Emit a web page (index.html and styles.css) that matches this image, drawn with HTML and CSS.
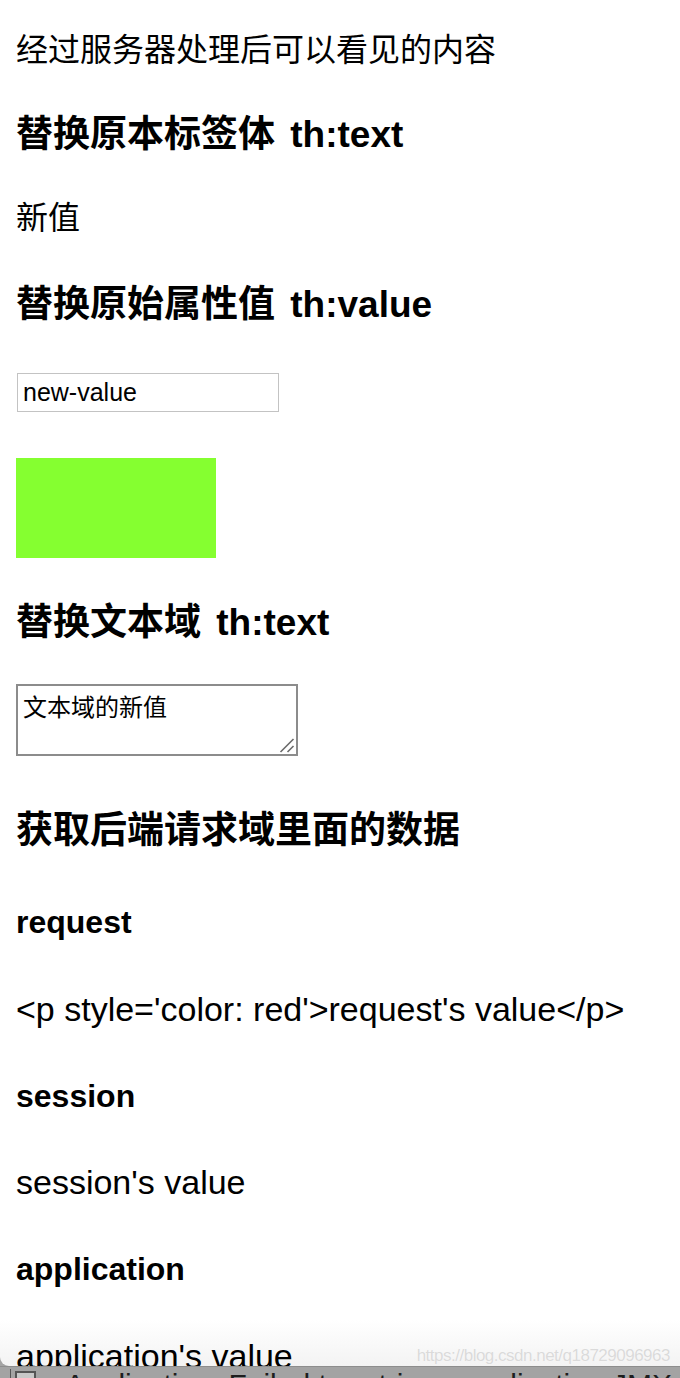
FILE: index.html
```html
<!DOCTYPE html>
<html lang="zh-CN">
<head>
<meta charset="utf-8">
<title>Thymeleaf</title>
<link rel="stylesheet" href="styles.css">
</head>
<body>
<div class="window">
  <div class="content">
    <p class="text cjk lead">经过服务器处理后可以看见的内容</p>
    <h2 class="heading">替换原本标签体 th:text</h2>
    <p class="text cjk value">新值</p>
    <h2 class="heading">替换原始属性值 th:value</h2>
    <div class="field-row"><input class="field" type="text" value="new-value"></div>
    <div class="swatch"></div>
    <h2 class="heading after-swatch">替换文本域 th:text</h2>
    <div class="memo-wrap">
      <textarea class="memo">文本域的新值</textarea>
      <svg class="grip" width="16" height="16" viewBox="0 0 16 16" aria-hidden="true">
        <line x1="1.5" y1="15" x2="14.5" y2="2" stroke="#6a6a6a" stroke-width="1.6"/>
        <line x1="8.5" y1="15" x2="14.5" y2="9" stroke="#6a6a6a" stroke-width="1.6"/>
      </svg>
    </div>
    <h2 class="heading section">获取后端请求域里面的数据</h2>
    <h4 class="label first">request</h4>
    <p class="text scope">&lt;p style='color: red'&gt;request's value&lt;/p&gt;</p>
    <h4 class="label">session</h4>
    <p class="text scope">session's value</p>
    <h4 class="label">application</h4>
    <p class="text scope">application's value</p>
  </div>
  <div class="watermark">https://blog.csdn.net/q18729096963</div>
</div>
<div class="console">
  <span class="tick"></span>
  <span class="box"></span>
  <span class="msg">Application: Failed to retrieve application JMX service URL (</span>
</div>
</body>
</html>
```
FILE: styles.css
```css
html, body {
  margin: 0;
  padding: 0;
}
body {
  width: 680px;
  height: 1378px;
  overflow: hidden;
  background: #a4a4a4;
  font-family: "Liberation Sans", "Noto Sans CJK SC", sans-serif;
  color: #000;
}
.window {
  position: relative;
  height: 1366px;
  overflow: hidden;
  background: linear-gradient(to bottom, #ffffff 0, #ffffff 1320px, #f3f3f3 1366px);
  border-bottom-left-radius: 9px;
}
.content {
  padding: 28px 16px 0;
  display: flex;
  flex-direction: column;
  align-items: flex-start;
}
.text {
  margin: 0;
  font-size: 34px;
  line-height: 40px;
  font-weight: normal;
}
.text.cjk { font-size: 32px; }
.lead { padding-top: 2px; height: 38px; }
.value { margin-top: 41px; }
.heading {
  margin: 45px 0 0;
  font-size: 37px;
  line-height: 44px;
  font-weight: bold;
  word-spacing: 5px;
}
.heading.after-swatch { margin-top: 43px; }
.heading.section { margin-top: 53px; }
.field-row { margin-top: 46px; }
.field {
  display: block;
  box-sizing: border-box;
  width: 262px;
  height: 39px;
  margin: 0 0 0 1px;
  padding: 0 5px;
  border: 1px solid #c3c3c3;
  background: #fff;
  font-family: "Liberation Sans", "Noto Sans CJK SC", sans-serif;
  font-size: 25px;
  color: #000;
  outline: none;
}
.swatch {
  margin-top: 46px;
  width: 200px;
  height: 100px;
  background: #85ff30;
}
.memo-wrap {
  position: relative;
  margin-top: 39px;
  width: 282px;
  height: 72px;
}
.memo {
  display: block;
  box-sizing: border-box;
  width: 282px;
  height: 72px;
  margin: 0;
  padding: 7px 5px;
  border: 2px solid #8c8c8c;
  background: #fff;
  font-family: "Liberation Sans", "Noto Sans CJK SC", sans-serif;
  font-size: 24px;
  line-height: 30px;
  color: #000;
  resize: none;
  outline: none;
  overflow: hidden;
}
.grip {
  position: absolute;
  right: 3px;
  bottom: 3px;
}
.label {
  margin: 47px 0 0;
  font-size: 32px;
  line-height: 40px;
  font-weight: bold;
}
.label.first { margin-top: 49px; }
.scope { margin-top: 46.5px; }
.watermark {
  position: absolute;
  right: 10px;
  bottom: 0;
  font-family: "Liberation Sans", sans-serif;
  font-size: 17px;
  line-height: 20px;
  letter-spacing: -0.5px;
  color: #dadada;
  text-shadow: 0 0 1px #ffffff;
}
.console {
  height: 12px;
  overflow: hidden;
  display: flex;
  align-items: flex-start;
  background: #a3a3a3;
  border-top: 1px solid #8d8d8d;
  box-sizing: border-box;
}
.tick {
  flex: none;
  width: 1px;
  height: 12px;
  margin: 2px 0 0 10px;
  background: #555;
}
.box {
  flex: none;
  width: 21px;
  height: 22px;
  margin: 4px 0 0 4px;
  box-sizing: border-box;
  border: 2px solid #555;
  background: #c8c8c8;
}
.msg {
  flex: none;
  margin: 1px 0 0 29px;
  font-size: 30px;
  line-height: 34px;
  color: #1e1e1e;
  white-space: nowrap;
}
```
